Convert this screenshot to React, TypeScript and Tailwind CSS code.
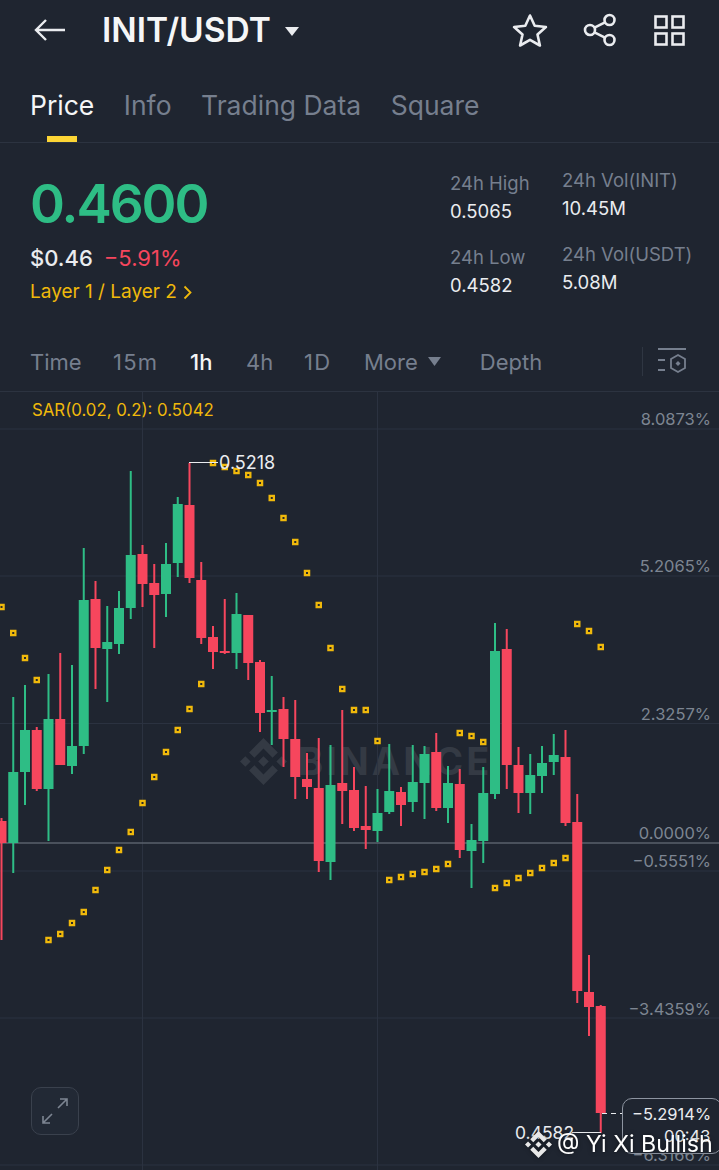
import React from "react";
import { SiBinance } from "react-icons/si";

// [color, bodyTop, bodyBottom, wickTop, wickBottom]
const candles: [string, number, number, number, number][] = [
  ["r", 821, 843, 818, 940],
  ["g", 772, 843, 697, 873],
  ["g", 730, 772, 685, 805],
  ["r", 730, 789, 727, 791],
  ["g", 719, 789, 674, 841],
  ["r", 719, 765, 653, 765],
  ["g", 746, 766, 665, 774],
  ["g", 600, 746, 548, 754],
  ["r", 599, 648, 581, 689],
  ["g", 642, 649, 606, 702],
  ["g", 608, 644, 591, 654],
  ["g", 555, 608, 471, 619],
  ["r", 554, 584, 545, 607],
  ["r", 583, 595, 564, 648],
  ["g", 564, 594, 543, 617],
  ["g", 504, 563, 497, 577],
  ["r", 505, 578, 463, 583],
  ["r", 580, 638, 562, 644],
  ["r", 637, 652, 626, 669],
  ["r", 651, 653, 599, 654],
  ["g", 614, 653, 593, 669],
  ["r", 615, 663, 615, 680],
  ["r", 662, 713, 660, 732],
  ["g", 710, 712, 676, 745],
  ["r", 709, 739, 697, 767],
  ["r", 739, 777, 700, 799],
  ["r", 779, 787, 753, 799],
  ["r", 788, 861, 738, 872],
  ["g", 785, 862, 745, 880],
  ["r", 783, 791, 710, 824],
  ["r", 790, 828, 767, 831],
  ["r", 826, 830, 786, 849],
  ["g", 813, 831, 789, 842],
  ["g", 791, 812, 744, 814],
  ["r", 792, 805, 787, 826],
  ["g", 782, 802, 745, 812],
  ["g", 754, 783, 746, 819],
  ["r", 752, 808, 733, 811],
  ["g", 783, 808, 766, 823],
  ["r", 784, 850, 769, 858],
  ["g", 840, 851, 824, 888],
  ["g", 793, 841, 767, 863],
  ["g", 651, 794, 623, 799],
  ["r", 649, 765, 629, 789],
  ["r", 765, 793, 747, 813],
  ["g", 775, 793, 754, 814],
  ["g", 763, 776, 746, 793],
  ["g", 755, 762, 734, 775],
  ["r", 757, 823, 730, 826],
  ["r", 822, 991, 794, 1003],
  ["r", 992, 1007, 955, 1036],
  ["r", 1006, 1113, 1005, 1133],
];

const sar = [
  607, 633, 658, 680, 940, 934, 923, 912, 890, 870, 850, 832, 803, 777, 752, 730, 709, 684, 463, 467, 471, 475, 483,
  498, 518, 542, 573, 605, 648, 689, 710, 710, 741, 880, 877, 874, 872, 869, 864, 733, 736, 742, 888, 883, 878, 873,
  868, 863, 858, 624, 631, 647,
];

const candleX = (i: number) => 1.5 + 11.75 * i;

const gridRows = [429, 576, 723.5, 871, 1018, 1165];

const axisLabels = [
  { text: "8.0873%", top: 16 },
  { text: "5.2065%", top: 163 },
  { text: "2.3257%", top: 311 },
  { text: "0.0000%", top: 430 },
  { text: "−0.5551%", top: 458 },
  { text: "−3.4359%", top: 606 },
  { text: "−6.3166%", top: 752 },
];

function Stat({ label, value, gap }: { label: string; value: string; gap: string }) {
  return (
    <div className={gap}>
      <div className="text-[18.5px] leading-[24px] text-[#767f8e]">{label}</div>
      <div className="mt-[4px] text-[18.5px] leading-[24px] text-[#eaecef]">{value}</div>
    </div>
  );
}

function Chart() {
  return (
    <div className="relative flex-1 overflow-hidden">
      {/* watermark sits under the candles */}
      <div className="absolute left-[240px] top-[346px] flex items-center gap-[11px] text-[#343a44]">
        <SiBinance className="h-[47px] w-[47px]" />
        <span className="text-[38px] font-bold leading-[47px] tracking-[3px]">BINANCE</span>
      </div>

      <svg className="absolute inset-0 h-full w-full" viewBox="0 392 719 778">
        {gridRows.map((y) => (
          <line key={y} x1="0" x2="719" y1={y} y2={y} stroke="#2b3240" strokeWidth="1" />
        ))}
        <line x1="142.5" x2="142.5" y1="392" y2="1170" stroke="#2b3240" strokeWidth="1" />
        <line x1="377.5" x2="377.5" y1="392" y2="1170" stroke="#2b3240" strokeWidth="1" />
        <line x1="0" x2="719" y1="843" y2="843" stroke="#5a606b" strokeWidth="1.5" />

        {candles.map(([c, top, bottom, wt, wb], i) => {
          const x = candleX(i);
          const fill = c === "g" ? "#2ebd85" : "#f6465d";
          return (
            <g key={i} fill={fill}>
              <rect x={x - 1} y={wt} width="2" height={wb - wt} />
              <rect x={x - 5} y={top} width="10" height={bottom - top} />
            </g>
          );
        })}

        {sar.map((y, i) => (
          <g key={i}>
            <rect x={candleX(i) - 3.25} y={y - 3.25} width="6.5" height="6.5" fill="#f0b90b" />
            <rect x={candleX(i) - 1} y={y - 1} width="2" height="2" fill="#2a2a26" />
          </g>
        ))}

        <line x1="189" x2="218" y1="462.5" y2="462.5" stroke="#eaecef" strokeWidth="1" />
        <line x1="572" x2="601" y1="1132.5" y2="1132.5" stroke="#eaecef" strokeWidth="1" />
        <line x1="602" x2="622" y1="1113.5" y2="1113.5" stroke="#eaecef" strokeWidth="1" strokeDasharray="5 4" />
      </svg>

      <div className="absolute left-[32px] top-[8px] text-[16.8px] leading-[20px] text-[#f0b90b]">
        SAR(0.02, 0.2): 0.5042
      </div>

      {axisLabels.map((a) => (
        <div
          key={a.text}
          className="absolute right-[8px] text-[16.5px] leading-[22px] text-[#7d8592]"
          style={{ top: a.top }}
        >
          {a.text}
        </div>
      ))}

      <div className="absolute left-[219px] top-[60px] text-[18px] leading-[22px] text-[#eaecef]">0.5218</div>
      <div className="absolute left-[515px] top-[730px] text-[17.5px] leading-[22px] text-[#eaecef]">0.4582</div>

      {/* last price box */}
      <div className="absolute left-[622px] top-[706px] h-[56px] w-[100px] rounded-[10px] border border-[#8d94a0] bg-[#1f2530] pl-[9px] pt-[4px] text-[16.5px] leading-[22px] text-[#eaecef]">
        <div>−5.2914%</div>
        <div className="pl-[32px]">00:43</div>
      </div>

      {/* expand */}
      <div className="absolute left-[31px] top-[695px] flex h-[48px] w-[48px] items-center justify-center rounded-[10px] border border-[#3a414d] bg-[#222935]">
        <svg width="28" height="28" viewBox="0 0 28 28" fill="none" stroke="#7d8592" strokeWidth="1.6">
          <path d="M2 19v7h7M2 26l9-9M26 9V2h-7M26 2l-9 9" />
        </svg>
      </div>

      {/* share watermark */}
      <div className="absolute left-[525px] top-[738px] flex items-center gap-[5px] whitespace-nowrap text-white drop-shadow-[0_0_2px_rgba(0,0,0,0.5)]">
        <SiBinance className="h-[27px] w-[27px] text-[#e8e8e8]" />
        <span className="text-[23.2px] leading-[28px]">@ Yi Xi Bullish</span>
      </div>
    </div>
  );
}

export default function App() {
  return (
    <div className="flex h-[1170px] w-[719px] flex-col overflow-hidden bg-[#1f2530] font-['Inter',sans-serif]">
      {/* Header */}
      <div className="flex h-[60px] items-center pl-[34px] pr-[34px]">
        <svg width="32" height="24" viewBox="0 0 32 24" fill="none" stroke="#eaecef" strokeWidth="2.4">
          <path d="M31 12H2M12 2 2 12l10 10" />
        </svg>
        <span className="ml-[36px] text-[33.5px] font-semibold leading-[40px] text-[#f5f6f7]">INIT/USDT</span>
        <svg className="ml-[13px] mt-[2px]" width="16" height="11" viewBox="0 0 16 11" fill="#eaecef">
          <path d="M1 1h14L8 10z" />
        </svg>
        <div className="ml-auto flex items-center">
          <svg width="36" height="34" viewBox="0 0 36 34" fill="none" stroke="#eaecef" strokeWidth="2.6" strokeLinejoin="round">
            <path d="M18 2.5l4.7 10.3 11.2 1.2-8.4 7.5 2.4 11-9.9-5.7-9.9 5.7 2.4-11L2.1 14l11.2-1.2z" />
          </svg>
          <svg className="ml-[35px]" width="34" height="34" viewBox="0 0 34 34" fill="none" stroke="#eaecef" strokeWidth="2.6">
            <circle cx="26.5" cy="7" r="5" />
            <circle cx="7" cy="17" r="5" />
            <circle cx="26.5" cy="27" r="5" />
            <path d="M11.5 14.7l10.500-5.400M11.500 19.300l10.500 5.400" />
          </svg>
          <svg className="ml-[37px]" width="31" height="31" viewBox="0 0 31 31" fill="none" stroke="#eaecef" strokeWidth="2.6">
            <rect x="1.500" y="1.500" width="11" height="11" />
            <rect x="18.500" y="1.500" width="11" height="11" />
            <rect x="1.500" y="18.500" width="11" height="11" />
            <rect x="18.500" y="18.500" width="11" height="11" />
          </svg>
        </div>
      </div>

      {/* Tabs */}
      <div className="flex h-[83px] items-start gap-[29.5px] border-b border-[#2c3340] pl-[30px] pt-[27px] text-[26.5px] leading-[36px] text-[#767f8e]">
        <div className="relative text-[#f5f6f7]">
          Price
          <div className="absolute left-[17px] top-[49px] h-[6px] w-[30px] bg-[#fcd535]" />
        </div>
        <div>Info</div>
        <div>Trading Data</div>
        <div>Square</div>
      </div>

      {/* Price block */}
      <div className="flex h-[197px] items-start">
        <div className="w-[450px] pl-[30px] pt-[28px]">
          <div className="text-[53px] font-semibold leading-[66px] tracking-[-2px] text-[#2ebd85]">0.4600</div>
          <div className="mt-[7px] flex items-baseline gap-[11px] text-[22px] leading-[28px]">
            <span className="font-medium text-[#eaecef]">$0.46</span>
            <span className="text-[#f6465d]">−5.91%</span>
          </div>
          <div className="mt-[8px] flex items-center gap-[6px] text-[19px] leading-[24px] text-[#f0b90b]">
            Layer 1 / Layer 2
            <svg width="9" height="15" viewBox="0 0 9 15" fill="none" stroke="#f0b90b" strokeWidth="1.800">
              <path d="M1.500 1.500l6 6-6 6" />
            </svg>
          </div>
        </div>
        <div className="w-[112px] pt-[28px]">
          <Stat label="24h High" value="0.5065" gap="" />
          <Stat label="24h Low" value="0.4582" gap="mt-[22px]" />
        </div>
        <div className="pt-[25px]">
          <Stat label="24h Vol(INIT)" value="10.45M" gap="" />
          <Stat label="24h Vol(USDT)" value="5.08M" gap="mt-[22px]" />
        </div>
      </div>

      {/* Timeframes */}
      <div className="flex h-[52px] shrink-0 items-center border-b border-[#2c3340] pb-[8px] pl-[30px] text-[22px] leading-[28px] text-[#767f8e]">
        <span className="w-[83px]">Time</span>
        <span className="w-[77px] tracking-[1.2px]">15m</span>
        <span className="w-[56px] font-medium text-[#f5f6f7]">1h</span>
        <span className="w-[58px]">4h</span>
        <span className="w-[60px] tracking-[1.2px]">1D</span>
        <span>More</span>
        <svg className="ml-[10px]" width="13" height="9" viewBox="0 0 13 9" fill="#767f8e">
          <path d="M0 0h13L6.500 9z" />
        </svg>
        <span className="ml-[39px]">Depth</span>
        <div className="ml-auto mr-[33px] flex items-center gap-[14px]">
          <div className="h-[29px] w-px bg-[#2f3642]" />
          <svg width="29" height="30" viewBox="0 0 29 30" fill="none" stroke="#767f8e" strokeWidth="1.800">
            <path d="M1 2h28M1 13h7M1 23h7" />
            <path d="M21 8l7 4v9l-7 4-7-4v-9z" />
            <path d="M21 14l2.500 2.500L21 19l-2.500-2.500z" fill="#767f8e" stroke="none" />
          </svg>
        </div>
      </div>

      <Chart />
    </div>
  );
}
